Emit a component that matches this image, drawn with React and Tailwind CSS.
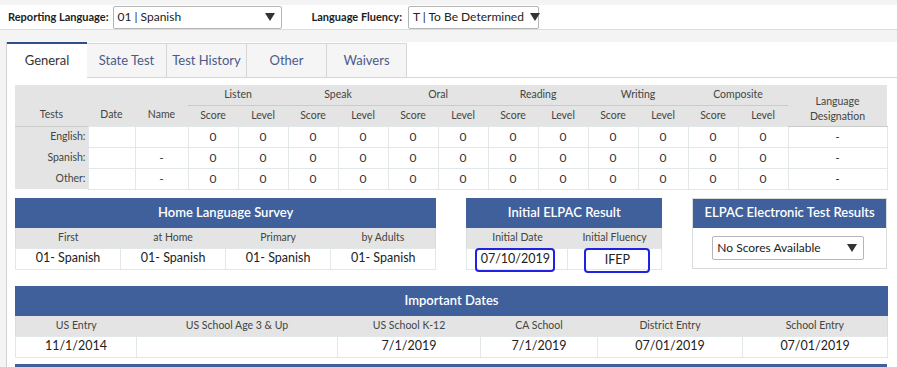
import React from 'react';

const font = { fontFamily: '"Lato", "Liberation Sans", sans-serif' };

const Caret = () => (
  <svg width="10" height="8" viewBox="0 0 10 8" className="shrink-0">
    <path d="M0 0 L10 0 L5 8 Z" fill="#333" />
  </svg>
);

const FakeSelect = ({ value, className }) => (
  <div className={`flex items-center justify-between gap-[6px] bg-white border border-[#b5b5b5] rounded-[2px] pl-[4px] pr-[6px] text-[12px] text-[#222] whitespace-nowrap ${className}`}>
    <span>{value}</span>
    <Caret />
  </div>
);

const tabs = ['General', 'State Test', 'Test History', 'Other', 'Waivers'];
const groups = ['Listen', 'Speak', 'Oral', 'Reading', 'Writing', 'Composite'];
const rows = [
  { label: 'English:', name: '' },
  { label: 'Spanish:', name: '-' },
  { label: 'Other:', name: '-' },
];

const BlueHead = ({ children, cols }) => (
  <tr>
    <th colSpan={cols} className="bg-[#40609c] text-white text-[13px] font-semibold h-[29px] border border-[#40609c]">
      {children}
    </th>
  </tr>
);

const dates = [
  { label: 'US Entry', value: '11/1/2014', w: 'w-[121px]' },
  { label: 'US School Age 3 & Up', value: '', w: 'w-[201px]' },
  { label: 'US School K-12', value: '7/1/2019', w: 'w-[143px]' },
  { label: 'CA School', value: '7/1/2019', w: 'w-[117px]' },
  { label: 'District Entry', value: '07/01/2019', w: 'w-[145px]' },
  { label: 'School Entry', value: '07/01/2019', w: 'w-[145px]' },
];

export default function App() {
  return (
    <div className="bg-[#f4f4f4] min-h-screen pt-[5px] overflow-hidden" style={font}>
      {/* top filter bar */}
      <div className="bg-white h-[25px] border-b border-[#dcdcdc] flex items-center pl-[8px]">
        <span className="text-[11px] font-bold text-[#222] mr-[4px]">Reporting Language:</span>
        <FakeSelect value="01 | Spanish" className="w-[169px] h-[23px]" />
        <span className="text-[11px] font-bold text-[#222] ml-[30px] mr-[6px]">Language Fluency:</span>
        <FakeSelect value="T | To Be Determined" className="w-[131px] h-[23px]" />
      </div>

      <div className="mt-[12px] ml-[6px] bg-white border-l border-[#d0d0d0] min-h-[330px]">
        {/* tabs */}
        <div className="flex h-[36px]">
          {tabs.map((t, i) =>
            i === 0 ? (
              <div key={t} className="w-[80px] border-t-2 border-[#2e4f8c] bg-white flex items-center justify-center text-[13px] text-[#333]">
                {t}
              </div>
            ) : (
              <div key={t} className="w-[80px] mt-[1px] bg-[#f5f5f5] border border-l-0 border-[#d6d6d6] flex items-center justify-center text-[13px] text-[#4a5a8a]">
                {t}
              </div>
            )
          )}
          <div className="flex-1 border-b border-[#d6d6d6]" />
        </div>

        <div className="pl-[8px] pr-[10px] pt-[7px]">
          {/* scores table */}
          <table className="w-[872px] border-collapse text-[#444] table-fixed">
            <colgroup>
              <col className="w-[73px]" />
              <col className="w-[47px]" />
              <col className="w-[53px]" />
              {Array.from({ length: 12 }).map((_, i) => (
                <col key={i} className="w-[50px]" />
              ))}
              <col className="w-[99px]" />
            </colgroup>
            <thead className="bg-[#e3e4e3] text-[10.5px]">
              <tr className="h-[20px]">
                <th colSpan={3} className="font-normal" />
                {groups.map((g) => (
                  <th key={g} colSpan={2} className="font-normal border-b border-[#c9cbc9] pt-[1px]">
                    {g}
                  </th>
                ))}
                <th rowSpan={2} className="font-normal leading-[15px] align-bottom pb-[2px] border-b border-[#c9cbc9]">
                  Language<br />Designation
                </th>
              </tr>
              <tr className="h-[21px] border-b border-[#c9cbc9]">
                <th className="font-normal">Tests</th>
                <th className="font-normal">Date</th>
                <th className="font-normal">Name</th>
                {groups.map((g) => (
                  <React.Fragment key={g}>
                    <th className="font-normal">Score</th>
                    <th className="font-normal">Level</th>
                  </React.Fragment>
                ))}
              </tr>
            </thead>
            <tbody className="text-[12px] text-[#333]">
              {rows.map((r) => (
                <tr key={r.label} className="h-[21px]">
                  <td className="bg-[#e3e4e3] text-right pr-[2px] text-[10.5px] text-[#444]">{r.label}</td>
                  <td className="border border-[#e2e7ea]" />
                  <td className="border border-[#e2e7ea] text-center">{r.name}</td>
                  {Array.from({ length: 12 }).map((_, i) => (
                    <td key={i} className="border border-[#e2e7ea] text-center">0</td>
                  ))}
                  <td className="border border-[#e2e7ea] text-center">-</td>
                </tr>
              ))}
            </tbody>
          </table>

          {/* middle boxes */}
          <div className="flex items-start mt-[8px]">
            <table className="w-[422px] border-collapse table-fixed border border-[#d9dcdd]">
              <thead>
                <BlueHead cols={4}>Home Language Survey</BlueHead>
                <tr className="h-[21px] bg-[#e3e4e3] text-[10.5px] text-[#444]">
                  {['First', 'at Home', 'Primary', 'by Adults'].map((h) => (
                    <th key={h} className="font-normal">{h}</th>
                  ))}
                </tr>
              </thead>
              <tbody>
                <tr className="h-[21px] text-[12.5px] text-[#222]">
                  {[0, 1, 2, 3].map((i) => (
                    <td key={i} className="border border-[#e2e7ea] text-center">01- Spanish</td>
                  ))}
                </tr>
              </tbody>
            </table>

            <table className="ml-[30px] w-[195px] border-collapse table-fixed border border-[#d9dcdd]">
              <colgroup>
                <col className="w-[101px]" />
                <col className="w-[94px]" />
              </colgroup>
              <thead>
                <BlueHead cols={2}>Initial ELPAC Result</BlueHead>
                <tr className="h-[21px] bg-[#e3e4e3] text-[10.5px] text-[#444]">
                  <th className="font-normal">Initial Date</th>
                  <th className="font-normal">Initial Fluency</th>
                </tr>
              </thead>
              <tbody>
                <tr className="h-[21px] text-[12.5px] text-[#222]">
                  <td className="border border-[#e2e7ea] p-0 relative">
                    <div className="absolute left-[8px] top-[-1px] w-[80px] h-[24px] border-2 border-[#1f22e0] rounded-[4px] flex items-center justify-center">
                      07/10/2019
                    </div>
                  </td>
                  <td className="border border-[#e2e7ea] p-0 relative">
                    <div className="absolute left-[16px] top-[-1px] w-[66px] h-[25px] border-2 border-[#1f22e0] rounded-[4px] flex items-center justify-center">
                      IFEP
                    </div>
                  </td>
                </tr>
              </tbody>
            </table>

            <div className="ml-[30px] w-[195px] border border-[#d9dcdd] h-[71px]">
              <div className="bg-[#40609c] text-white text-[13px] font-semibold h-[29px] flex items-center justify-center">
                ELPAC Electronic Test Results
              </div>
              <div className="pl-[19px] pt-[8px]">
                <FakeSelect value="No Scores Available" className="w-[152px] h-[24px]" />
              </div>
            </div>
          </div>

          {/* important dates */}
          <table className="mt-[16px] w-[872px] border-collapse table-fixed border border-[#d9dcdd]">
            <colgroup>
              {dates.map((d) => (
                <col key={d.label} className={d.w} />
              ))}
            </colgroup>
            <thead>
              <BlueHead cols={6}>Important Dates</BlueHead>
              <tr className="h-[21px] bg-[#e3e4e3] text-[10.5px] text-[#444]">
                {dates.map((d) => (
                  <th key={d.label} className="font-normal">{d.label}</th>
                ))}
              </tr>
            </thead>
            <tbody>
              <tr className="h-[21px] text-[12.5px] text-[#222]">
                {dates.map((d) => (
                  <td key={d.label} className="border border-[#e2e7ea] text-center">{d.value}</td>
                ))}
              </tr>
            </tbody>
          </table>

          <div className="mt-[6px] w-[872px] h-[10px] bg-[#40609c]" />
        </div>
      </div>
    </div>
  );
}
